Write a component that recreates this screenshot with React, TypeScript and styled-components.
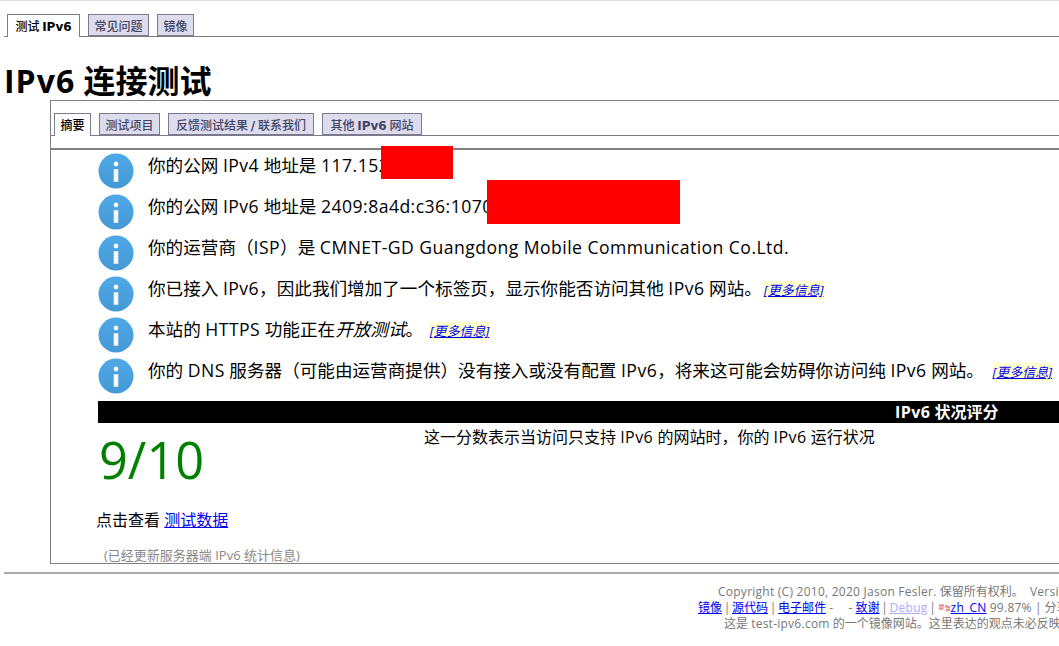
import React from "react";
import styled, { createGlobalStyle } from "styled-components";

const GlobalStyle = createGlobalStyle`
  html, body {
    margin: 0;
    padding: 0;
    background: #fff;
    overflow: hidden;
  }
  body {
    font-family: "Open Sans", "Noto Sans CJK SC", sans-serif;
    color: #000;
  }
  a {
    color: #0000ee;
  }
`;

const Page = styled.div`
  width: 1059px;
  height: 646px;
  overflow: hidden;
  border-top: 1px solid #e2e2e2;
  box-sizing: border-box;
`;

const Tabs = styled.div<{ $top: number; $left: number; $inset?: number }>`
  display: flex;
  align-items: flex-end;
  gap: 8px;
  height: 22px;
  margin-top: ${(props) => props.$top}px;
  margin-left: ${(props) => props.$inset || 0}px;
  padding-left: ${(props) => props.$left}px;
  border-bottom: 1px solid #7a7a8c;
`;

const Tab = styled.div<{ $active?: boolean; $width: number }>`
  box-sizing: border-box;
  width: ${(props) => props.$width}px;
  height: ${(props) => (props.$active ? 23 : 22)}px;
  margin-bottom: ${(props) => (props.$active ? -1 : 0)}px;
  border: 1px solid #7a7a8c;
  border-bottom: ${(props) => (props.$active ? "none" : "1px solid #7a7a8c")};
  background: ${(props) => (props.$active ? "#fff" : "#dcdcec")};
  color: ${(props) => (props.$active ? "#000" : "#444466")};
  font: 500 12px/22px "Noto Sans CJK SC", sans-serif;
  text-align: center;
  white-space: nowrap;
`;

const TabLatin = styled.span`
  font-family: "DejaVu Sans", sans-serif;
  font-weight: 700;
  word-spacing: -1px;
`;

const Title = styled.h1`
  margin: 25px 0 0 4px;
  height: 38px;
  font-size: 32px;
  font-weight: 700;
  line-height: 37px;
  white-space: nowrap;
`;

const TitleLatin = styled.span`
  letter-spacing: 1px;
`;

const Latin = styled.span`
  letter-spacing: 0.45px;
`;

const Panel = styled.div`
  position: relative;
  box-sizing: border-box;
  width: 1100px;
  height: 464px;
  margin: 0 0 0 50px;
  border: 1px solid #808080;
  border-right: none;
`;

const PanelRule = styled.div`
  height: 2px;
  margin-top: 12px;
  background: #808080;
`;

const Messages = styled.div`
  display: flex;
  flex-direction: column;
  padding: 1px 0 0 47px;
`;

const Message = styled.div`
  display: flex;
  align-items: flex-start;
  gap: 14px;
  height: 41px;
  font-size: 17.6px;
  line-height: 29px;
  white-space: nowrap;
`;

const InfoIcon = styled.svg`
  flex: none;
  width: 36px;
  height: 36px;
  margin-top: 2px;
`;

const MoreInfo = styled.a<{ $gap?: number }>`
  margin-left: ${(props) => props.$gap || 2}px;
  background: #ffffcc;
  font-size: 13px;
  font-style: italic;
  text-decoration: underline;
`;

const Redaction = styled.div<{ $x: number; $y: number; $w: number; $h: number }>`
  position: absolute;
  left: ${(props) => props.$x}px;
  top: ${(props) => props.$y}px;
  width: ${(props) => props.$w}px;
  height: ${(props) => props.$h}px;
  background: #ff0000;
`;

const ScoreBar = styled.div`
  height: 22px;
  margin: 4px 0 0 47px;
  padding-left: 797px;
  background: #000;
  color: #fff;
  font-size: 16px;
  font-weight: 700;
  line-height: 23px;
  white-space: nowrap;
`;

const ScoreRow = styled.div`
  display: flex;
  height: 75px;
  margin-left: 48px;
`;

const Score = styled.div`
  width: 325px;
  margin-top: 6px;
  color: #008000;
  font-size: 50.5px;
  line-height: 62px;
`;

const ScoreNote = styled.div`
  margin-top: 3px;
  font-size: 16px;
  line-height: 22px;
  white-space: nowrap;
`;

const ClickLine = styled.div`
  margin: 11px 0 0 45px;
  font-size: 16px;
  line-height: 22px;
`;

const StatsNote = styled.div`
  margin: 14px 0 0 53px;
  color: #888;
  font-size: 13px;
  line-height: 20px;
`;

const Rule = styled.div`
  height: 2px;
  margin: 8px 0 0 4px;
  background: #aaa;
`;

const Footer = styled.div`
  display: flex;
  flex-direction: column;
  padding: 10px 0 0 698px;
  color: #777;
  font-size: 12px;
  line-height: 16px;
  white-space: nowrap;
`;

const FooterLine = styled.div<{ $indent?: number }>`
  margin-left: ${(props) => props.$indent || 0}px;
`;

const FooterLatin = styled.span`
  letter-spacing: 0.25px;
`;

const Sep = styled.span`
  display: inline-block;
  width: 10px;
  text-align: center;
`;

const DimLink = styled.a`
  color: #aaaaff;
`;

const Flag = styled.svg`
  width: 13px;
  height: 9px;
  vertical-align: 0;
`;

const Info = () => (
  <InfoIcon viewBox="0 0 36 36">
    <defs>
      <linearGradient id="info-blue" x1="0" y1="0" x2="0" y2="1">
        <stop offset="0%" stopColor="#4ea9e6" />
        <stop offset="100%" stopColor="#4499d6" />
      </linearGradient>
    </defs>
    <circle cx="18" cy="18" r="17.5" fill="url(#info-blue)" />
    <circle cx="18" cy="11" r="2.4" fill="#f4f8fc" />
    <path d="M15.7 16.2h4.6v12.6h-4.6z" fill="#f4f8fc" />
  </InfoIcon>
);

const App: React.FC = () => {
  return (
    <Page>
      <GlobalStyle />
      <Tabs $top={13} $left={3} $inset={4}>
        <Tab $active $width={73}>测试 <TabLatin>IPv6</TabLatin></Tab>
        <Tab $width={61}>常见问题</Tab>
        <Tab $width={37}>镜像</Tab>
      </Tabs>
      <Title><TitleLatin>IPv6</TitleLatin> 连接测试</Title>
      <Panel>
        <Tabs $top={12} $left={3}>
          <Tab $active $width={37}>摘要</Tab>
          <Tab $width={61}>测试项目</Tab>
          <Tab $width={146}>反馈测试结果 <TabLatin>/</TabLatin> 联系我们</Tab>
          <Tab $width={100}>其他 <TabLatin>IPv6</TabLatin> 网站</Tab>
        </Tabs>
        <PanelRule />
        <Messages>
          <Message><Info /><span>你的公网 <Latin>IPv4</Latin> 地址是 <Latin>117.152.</Latin></span></Message>
          <Message><Info /><span>你的公网 <Latin>IPv6</Latin> 地址是 <Latin>2409:8a4d:c36:1070</Latin></span></Message>
          <Message><Info /><span>你的运营商（<Latin>ISP</Latin>）是 <Latin>CMNET-GD Guangdong Mobile Communication Co.Ltd.</Latin></span></Message>
          <Message>
            <Info />
            <span>你已接入 <Latin>IPv6</Latin>，因此我们增加了一个标签页，显示你能否访问其他 <Latin>IPv6</Latin> 网站。<MoreInfo href="#">[更多信息]</MoreInfo></span>
          </Message>
          <Message>
            <Info />
            <span>本站的 <Latin>HTTPS</Latin> 功能正在<em>开放测试</em>。 <MoreInfo href="#">[更多信息]</MoreInfo></span>
          </Message>
          <Message>
            <Info />
            <span>你的 <Latin>DNS</Latin> 服务器（可能由运营商提供）没有接入或没有配置 <Latin>IPv6</Latin>，将来这可能会妨碍你访问纯 <Latin>IPv6</Latin> 网站。 <MoreInfo href="#" $gap={4}>[更多信息]</MoreInfo></span>
          </Message>
        </Messages>
        <ScoreBar><Latin>IPv6</Latin> 状况评分</ScoreBar>
        <ScoreRow>
          <Score>9/10</Score>
          <ScoreNote>这一分数表示当访问只支持 <Latin>IPv6</Latin> 的网站时，你的 <Latin>IPv6</Latin> 运行状况</ScoreNote>
        </ScoreRow>
        <ClickLine>点击查看 <a href="#">测试数据</a></ClickLine>
        <StatsNote>(已经更新服务器端 IPv6 统计信息)</StatsNote>
        <Redaction $x={330} $y={45} $w={72} $h={33} />
        <Redaction $x={436} $y={79} $w={193} $h={44} />
      </Panel>
      <Rule />
      <Footer>
        <FooterLine $indent={20}><FooterLatin>Copyright (C) 2010, 2020 Jason Fesler.</FooterLatin> 保留所有权利。&nbsp; <FooterLatin>Version 1.1</FooterLatin></FooterLine>
        <FooterLine>
          <a href="#">镜像</a><Sep>|</Sep><a href="#">源代码</a><Sep>|</Sep><a href="#">电子邮件</a> - &nbsp;&nbsp;&nbsp; - <a href="#">致谢</a><Sep>|</Sep><DimLink href="#"><FooterLatin>Debug</FooterLatin></DimLink><Sep>|</Sep><Flag viewBox="0 0 13 9"><path d="M1 2.5h5M1 5.5h4.5M7 3l5 1.5M7.5 7h4.5" stroke="#ef8f96" strokeWidth="2.6" fill="none" /></Flag><a href="#"><FooterLatin>zh_CN</FooterLatin></a> <FooterLatin>99.87%</FooterLatin> | 分享
        </FooterLine>
        <FooterLine $indent={26}>这是 <FooterLatin>test-ipv6.com</FooterLatin> 的一个镜像网站。这里表达的观点未必反映</FooterLine>
      </Footer>
    </Page>
  );
};

export default App;
